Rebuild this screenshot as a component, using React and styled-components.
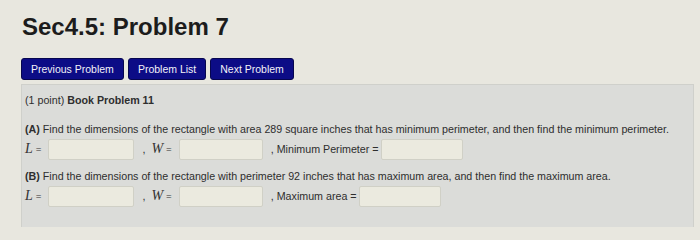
import React from "react";
import styled, { createGlobalStyle } from "styled-components";

const GlobalStyle = createGlobalStyle`
  html, body {
    margin: 0;
    padding: 0;
    background: #e8e7df;
    font-family: "Liberation Sans", Arial, sans-serif;
    overflow: hidden;
  }
`;

const Page = styled.div`
  width: 700px;
  height: 227px;
  padding: 12px 6px 0 21px;
  box-sizing: border-box;
  overflow: hidden;
`;

const Title = styled.h1`
  margin: 0 0 0 1px;
  font-size: 24px;
  font-weight: bold;
  color: #1c1c1c;
  line-height: 30px;
`;

const ButtonRow = styled.div`
  display: flex;
  gap: 4px;
  margin-top: 16px;
`;

const NavButton = styled.button`
  height: 22px;
  padding: 0 9px;
  background: #0c0c86;
  color: #f2f2f8;
  border: 1px solid #06064f;
  border-radius: 3px;
  font-family: "Liberation Sans", Arial, sans-serif;
  font-size: 10.5px;
  cursor: pointer;
`;

const Panel = styled.div`
  margin-top: 4px;
  height: 220px;
  background: #dbdcd9;
  border: 1px solid #cfd0cb;
  padding: 9px 3px;
  color: #2e2e2e;
  font-size: 10.7px;
`;

const Header = styled.div`
  margin-bottom: 16px;
`;

const Question = styled.div`
  line-height: 14px;
  margin-bottom: 2px;
`;

const Row = styled.div`
  display: flex;
  align-items: center;
  height: 22px;
  margin-bottom: 9px;
`;

const MathVar = styled.span`
  display: inline-block;
  font-family: "Liberation Serif", "Times New Roman", serif;
  font-style: italic;
  font-size: 14px;
  color: #333;
  margin-right: 7px;
  small {
    font-style: normal;
    font-size: 10px;
    margin-left: 3px;
  }
`;

const Answer = styled.span`
  display: inline-block;
  width: ${(p) => p.w || 86}px;
  height: 21px;
  box-sizing: border-box;
  background: #ebeadf;
  border: 1px solid #d0d0c6;
  border-radius: 2px;
  margin-right: 8px;
`;

const Label = styled.span`
  margin-right: ${(p) => p.mr || 2}px;
`;

function Answers({ last }) {
  return (
    <Row>
      <MathVar>
        L<small>=</small>
      </MathVar>
      <Answer />
      <Label mr={6}>,</Label>
      <MathVar>
        W<small>=</small>
      </MathVar>
      <Answer w={84} />
      <Label>, {last} =</Label>
      <Answer w={82} />
    </Row>
  );
}

export default function App() {
  return (
    <>
      <GlobalStyle />
      <Page>
        <Title>Sec4.5: Problem 7</Title>
        <ButtonRow>
          <NavButton>Previous Problem</NavButton>
          <NavButton>Problem List</NavButton>
          <NavButton>Next Problem</NavButton>
        </ButtonRow>
        <Panel>
          <Header>
            (1 point) <b>Book Problem 11</b>
          </Header>
          <Question>
            <b>(A)</b> Find the dimensions of the rectangle with area 289 square
            inches that has minimum perimeter, and then find the minimum
            perimeter.
          </Question>
          <Answers last="Minimum Perimeter" />
          <Question>
            <b>(B)</b> Find the dimensions of the rectangle with perimeter 92
            inches that has maximum area, and then find the maximum area.
          </Question>
          <Answers last="Maximum area" />
        </Panel>
      </Page>
    </>
  );
}
